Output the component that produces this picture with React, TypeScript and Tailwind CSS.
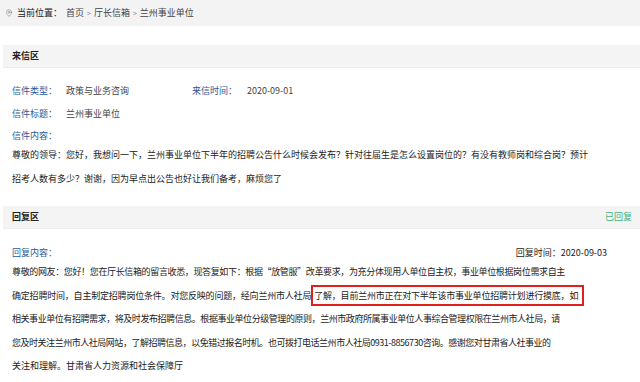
import { MapPin } from "lucide-react";

const font = { fontFamily: '"Noto Sans CJK SC", "Noto Sans", sans-serif' };

function SectionHeader({ title, right }: { title: string; right?: string }) {
    return (
        <div className="ml-[3px] flex h-[23px] items-center justify-between border-b border-[#ececec] bg-[#f4f4f4] pl-[9px] pr-[8px]">
            <span className="text-[9px] font-bold text-[#222]">{title}</span>
            {right && <span className="text-[9px] text-[#3fb37f]">{right}</span>}
        </div>
    );
}

export default function App() {
    return (
        <div className="h-[382px] w-[640px] overflow-hidden bg-white text-[9px] text-[#222]" style={font}>
            {/* breadcrumb */}
            <div className="flex h-[26px] items-center bg-[#f3f3f3] pl-[5px] text-[#444]">
                <MapPin size={8} strokeWidth={1.5} className="mr-[4px] text-[#777]" />
                <span className="text-[#222]">当前位置：</span>
                <span className="ml-[4px]">首页</span>
                <span className="mx-[3px] text-[7px] text-[#888]">&gt;</span>
                <span>厅长信箱</span>
                <span className="mx-[3px] text-[7px] text-[#888]">&gt;</span>
                <span>兰州事业单位</span>
            </div>

            <div className="mt-[19px]">
                <SectionHeader title="来信区" />
            </div>

            <div className="mt-[12px] px-[12px]">
                <div className="flex h-[22px] items-center">
                    <span className="w-[54px] text-[#2a5898]">信件类型：</span>
                    <span className="w-[126px] text-[#444]">政策与业务咨询</span>
                    <span className="w-[55px] text-[#2a5898]">来信时间：</span>
                    <span className="text-[#444]">2020-09-01</span>
                </div>
                <div className="mt-[1px] flex h-[22px] items-center">
                    <span className="w-[54px] text-[#2a5898]">信件标题：</span>
                    <span className="text-[#444]">兰州事业单位</span>
                </div>
                <div className="flex h-[22px] items-center text-[#2a5898]">信件内容：</div>
                <div className="-mt-[4px] whitespace-nowrap leading-[24px]">
                    <div>尊敬的领导：您好，我想问一下，兰州事业单位下半年的招聘公告什么时候会发布？针对往届生是怎么设置岗位的？有没有教师岗和综合岗？预计</div>
                    <div>招考人数有多少？谢谢，因为早点出公告也好让我们备考，麻烦您了</div>
                </div>
            </div>

            <div className="mt-[15px]">
                <SectionHeader title="回复区" right="已回复" />
            </div>

            <div className="mt-[13px] px-[12px]">
                <div className="flex h-[22px] items-center justify-between pr-[21px]">
                    <span className="text-[#2a5898]">回复内容：</span>
                    <span>回复时间：2020-09-03</span>
                </div>
                <div className="-mt-[4px] whitespace-nowrap leading-[23.5px]">
                    <div className="tracking-[-0.36px]">尊敬的网友：您好！您在厅长信箱的留言收悉，现答复如下：根据“放管服”改革要求，为充分体现用人单位自主权，事业单位根据岗位需求自主</div>
                    <div className="tracking-[-0.2px]">
                        确定招聘时间，自主制定招聘岗位条件。对您反映的问题，经向兰州市人社局
                        <span className="border-2 border-[#e0201c] py-[2px] pl-[1px] pr-[4px]">了解，目前兰州市正在对下半年该市事业单位招聘计划进行摸底，如</span>
                    </div>
                    <div className="tracking-[-0.44px]">相关事业单位有招聘需求，将及时发布招聘信息。根据事业单位分级管理的原则，兰州市政府所属事业单位人事综合管理权限在兰州市人社局，请</div>
                    <div className="tracking-[-0.47px]">您及时关注兰州市人社局网站，了解招聘信息，以免错过报名时机。也可拨打电话兰州市人社局0931-8856730咨询。感谢您对甘肃省人社事业的</div>
                    <div>关注和理解。甘肃省人力资源和社会保障厅</div>
                </div>
            </div>
        </div>
    );
}
